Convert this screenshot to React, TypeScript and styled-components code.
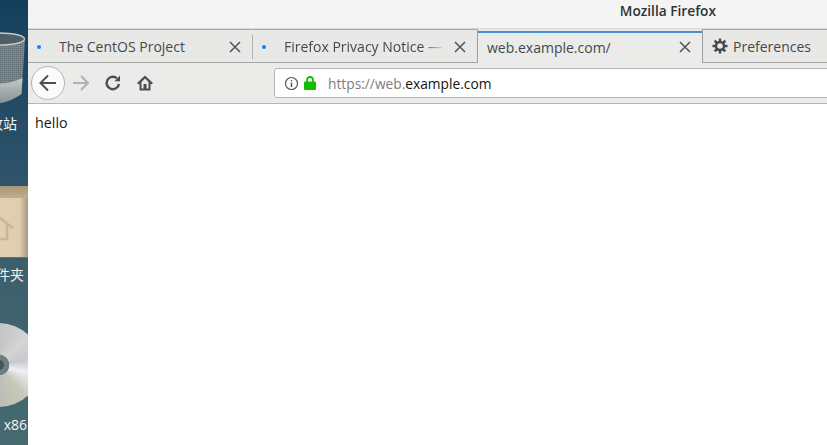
import React, { FC } from "react";
import styled, { createGlobalStyle } from "styled-components";

const Global = createGlobalStyle`
  html, body { margin: 0; padding: 0; height: 100%; overflow: hidden; }
  body { font-family: "Open Sans", "Noto Sans CJK SC", sans-serif; }
`;

const tabs = [
  { id: 1, title: "The CentOS Project", width: 225, fade: false },
  { id: 2, title: "Firefox Privacy Notice — Mozilla", width: 225, fade: true },
];

const App: FC = () => (
  <>
    <Global />
    <Screen>
      <Desktop>
        <TrashIcon viewBox="0 0 28 84">
          <defs>
            <pattern id="mesh" width="2" height="2" patternUnits="userSpaceOnUse">
              <rect width="2" height="2" fill="#727f85" />
              <rect width="1" height="1" fill="#65727a" />
              <rect x="1" y="1" width="1" height="1" fill="#828e93" />
            </pattern>
            <linearGradient id="canBottom" x1="0" x2="0" y1="0" y2="1">
              <stop offset="0" stopColor="#c4c8c7" />
              <stop offset="1" stopColor="#8a9294" />
            </linearGradient>
          </defs>
          <path d="M-24 14 H25 L21.5 68 Q-2 84 -20 72 Z" fill="url(#mesh)" />
          <path d="M-22 54 Q2 62 22.5 52 L21.5 68 Q-2 84 -20 72 Z" fill="url(#canBottom)" />
          <ellipse cx="0" cy="13" rx="24.5" ry="6" fill="#4f5e65" stroke="#c3cacc" strokeWidth="1.4" />
        </TrashIcon>
        <DesktopLabel $top={114} $right={11}>回收站</DesktopLabel>
        <FolderIcon>
          <FolderTab />
          <svg width="28" height="59" viewBox="0 0 28 59">
            <path d="M-4 17 L13 30 M7 26 V41 H-2" fill="none" stroke="#c9b59b" strokeWidth="2.5" />
          </svg>
        </FolderIcon>
        <DesktopLabel $top={265} $right={4}>件夹</DesktopLabel>
        <DiscIcon />
        <DesktopLabel $top={415} $right={1}>7 x86</DesktopLabel>
      </Desktop>
      <Window>
        <TitleBar>
          <WindowTitle>Mozilla Firefox</WindowTitle>
        </TitleBar>
        <TabStrip>
          {tabs.map((tab, i) => (
            <Tab key={tab.id} $width={tab.width} $separator={i === 0} $edge={i === 1}>
              <Dot />
              <TabTitle $fade={tab.fade}>{tab.title}</TabTitle>
              <CloseIcon />
            </Tab>
          ))}
          <ActiveTab>
            <ActiveTitle>web.example.com/</ActiveTitle>
            <CloseIcon />
          </ActiveTab>
          <PrefsTab>
            <GearIcon />
            <PrefsLabel>Preferences</PrefsLabel>
          </PrefsTab>
        </TabStrip>
        <Toolbar>
          <BackButton>
            <svg width="20" height="20" viewBox="0 0 20 20" fill="none" stroke="#4c4f52" strokeWidth="2">
              <path d="M18 10 H2.5 M10 2.5 L2.5 10 L10 17.5" />
            </svg>
          </BackButton>
          <ToolIcon $left={7}>
            <svg width="18" height="18" viewBox="0 0 18 18" fill="none" stroke="#b1b1b1" strokeWidth="2">
              <path d="M1 9 H16 M9 2 L16 9 L9 16" />
            </svg>
          </ToolIcon>
          <ToolIcon $left={14}>
            <svg width="18" height="18" viewBox="0 0 18 18" fill="none" stroke="#4c4f52" strokeWidth="2.4">
              <path d="M15 10 A6.2 6.2 0 1 1 12.8 4.2" />
              <path d="M10.5 7.2 H16 V1.6 Z" fill="#4c4f52" stroke="none" />
            </svg>
          </ToolIcon>
          <ToolIcon $left={14}>
            <svg width="18" height="18" viewBox="0 0 18 18">
              <path
                d="M9 1.5 L17 9 L15.5 10.4 L14.5 9.5 V16.5 H3.5 V9.5 L2.5 10.4 L1 9 Z M5.5 8 V14.5 H7.5 V10 H10.5 V14.5 H12.5 V8 L9 4.6 Z"
                fill="#4c4f52"
                fillRule="evenodd"
              />
            </svg>
          </ToolIcon>
          <UrlBar>
            <svg width="15" height="15" viewBox="0 0 15 15" fill="none" stroke="#55585b" strokeWidth="1.2">
              <circle cx="7.5" cy="7.5" r="6" />
              <path d="M7.5 6.5 V11 M7.5 4 V5.2" strokeWidth="1.5" />
            </svg>
            <svg width="12" height="14" viewBox="0 0 12 14">
              <path d="M3 6 V4 A3 3 0 0 1 9 4 V6" fill="none" stroke="#12bc00" strokeWidth="1.8" />
              <rect y="5.5" width="12" height="8.5" rx="1" fill="#12bc00" />
            </svg>
            <UrlText>
              <UrlMuted>https://web.</UrlMuted>example.com
            </UrlText>
          </UrlBar>
        </Toolbar>
        <Page>hello</Page>
      </Window>
    </Screen>
  </>
);

export default App;

const CloseIcon: FC = () => (
  <CloseGlyph width="12" height="12" viewBox="0 0 12 12" stroke="#55585b" strokeWidth="1.6">
    <path d="M1 1 L11 11 M11 1 L1 11" />
  </CloseGlyph>
);

const GearIcon: FC = () => (
  <svg width="16" height="16" viewBox="0 0 16 16" fill="none" stroke="#45484b">
    <circle cx="8" cy="8" r="4" strokeWidth="2.4" />
    <path
      d="M8 0.5 V3.5 M8 12.5 V15.5 M0.5 8 H3.5 M12.5 8 H15.5 M2.7 2.7 L4.8 4.8 M11.2 11.2 L13.3 13.3 M13.3 2.7 L11.2 4.8 M4.8 11.2 L2.7 13.3"
      strokeWidth="2.4"
    />
  </svg>
);

const Screen = styled.div`
  display: flex;
  width: 827px;
  height: 445px;
  overflow: hidden;
  background: #fff;
`;

const Desktop = styled.div`
  position: relative;
  flex: 0 0 28px;
  height: 445px;
  overflow: hidden;
  background: linear-gradient(180deg, #143f5c 0%, #2b5069 35%, #3c5f6c 60%, #466a70 100%);
`;

const TrashIcon = styled.svg`
  position: absolute;
  left: 0;
  top: 26px;
  width: 28px;
  height: 84px;
`;

const DesktopLabel = styled.div<{ $top: number; $right: number }>`
  position: absolute;
  right: ${(p) => p.$right}px;
  top: ${(p) => p.$top}px;
  font-size: 14px;
  line-height: 20px;
  color: #f4f4f4;
  white-space: nowrap;
`;

const FolderIcon = styled.div`
  position: absolute;
  left: 0;
  top: 186px;
  width: 28px;
  height: 71px;
  background: linear-gradient(90deg, #e2cfb2 0%, #e0ccaf 70%, #a8997f 100%);
  border-bottom: 1px solid #7d6a50;
  overflow: hidden;
`;

const FolderTab = styled.div`
  height: 12px;
  background: linear-gradient(180deg, #a89878, #bfae8c);
`;

const DiscIcon = styled.div`
  position: absolute;
  left: -43px;
  top: 323px;
  width: 84px;
  height: 84px;
  border-radius: 50%;
  background:
    radial-gradient(circle, #44565a 0 5px, #6f7e80 5px 10px, transparent 10.5px),
    conic-gradient(
      from 0deg,
      #c4c4c4 0deg,
      #d4d4d4 45deg,
      #c9c9ce 80deg,
      #eeeef6 105deg,
      #c8c8b8 140deg,
      #bdbdb8 180deg,
      #c4c4c4 360deg
    );
`;

const Window = styled.div`
  flex: 1;
  min-width: 0;
  display: flex;
  flex-direction: column;
`;

const TitleBar = styled.div`
  height: 28px;
  display: flex;
  justify-content: flex-end;
  padding-right: 111px;
  background: #f4f4f4;
  border-bottom: 1px solid #d8d8d8;
`;

const WindowTitle = styled.div`
  font-size: 13.7px;
  font-weight: 600;
  line-height: 22px;
  color: #2e3436;
`;

const TabStrip = styled.div`
  height: 33px;
  display: flex;
  background: #e8e8e7;
  border-bottom: 1px solid #a3a3a3;
`;

const Tab = styled.div<{ $width: number; $separator: boolean; $edge: boolean }>`
  position: relative;
  flex: 0 0 ${(p) => p.$width}px;
  min-width: 0;
  box-sizing: border-box;
  display: flex;
  align-items: center;
  padding: 1px 8px 0 9px;
  border-right: 1px solid ${(p) => (p.$edge ? "#9c9c9c" : "transparent")};
  border-top: 1px solid #a8a8a8;

  ${(p) =>
    p.$separator &&
    `&::after {
      content: "";
      position: absolute;
      right: -1px;
      top: 5px;
      height: 24px;
      width: 1px;
      background: #b0b0b0;
    }`}
`;

const Dot = styled.span`
  flex: 0 0 4px;
  height: 4px;
  border-radius: 50%;
  background: #0a84ff;
  margin-right: 18px;
`;

const TabTitle = styled.span<{ $fade: boolean }>`
  flex: 1;
  min-width: 0;
  overflow: hidden;
  white-space: nowrap;
  font-size: 14px;
  line-height: 30px;
  color: #45484b;
  ${(p) =>
    p.$fade &&
    `mask-image: linear-gradient(90deg, #000 calc(100% - 24px), transparent 100%);`}
`;

const CloseGlyph = styled.svg`
  flex: 0 0 12px;
  margin-left: 8px;
  margin-right: 3px;
`;

const ActiveTab = styled.div`
  flex: 0 0 224px;
  box-sizing: border-box;
  height: 32px;
  margin-top: 2px;
  margin-bottom: -1px;
  display: flex;
  align-items: center;
  padding: 0 8px 2px 9px;
  background: #ebebea;
  border-top: 2px solid #4a90d9;
  position: relative;
`;

const ActiveTitle = styled.span`
  flex: 1;
  font-size: 14px;
  color: #45484b;
  white-space: nowrap;
`;

const PrefsTab = styled.div`
  flex: 1;
  display: flex;
  align-items: center;
  gap: 5px;
  padding-left: 9px;
  border-left: 1px solid #9c9c9c;
  border-top: 1px solid #a8a8a8;
`;

const PrefsLabel = styled.span`
  font-size: 14px;
  color: #45484b;
`;

const Toolbar = styled.div`
  height: 40px;
  display: flex;
  align-items: center;
  padding-left: 3px;
  background: #ebebea;
  border-bottom: 1px solid #b5b5b5;
`;

const BackButton = styled.div`
  width: 32px;
  height: 32px;
  border-radius: 50%;
  display: flex;
  align-items: center;
  justify-content: center;
  background: #fbfbfb;
  border: 1px solid #b4b4b4;
`;

const ToolIcon = styled.div<{ $left: number }>`
  display: flex;
  margin-left: ${(p) => p.$left}px;
`;

const UrlBar = styled.div`
  flex: 1;
  height: 28px;
  margin-left: 120px;
  margin-right: -10px;
  display: flex;
  align-items: center;
  gap: 5px;
  padding-left: 9px;
  background: #fff;
  border: 1px solid #b5b5b5;
  border-radius: 3px;
`;

const UrlText = styled.span`
  margin-left: 7px;
  font-size: 13.75px;
  color: #111;
`;

const UrlMuted = styled.span`
  color: #7d7d7d;
`;

const Page = styled.div`
  flex: 1;
  padding: 9px 7px;
  background: #fff;
  font-size: 14.3px;
  line-height: 20px;
  color: #1a1a1a;
`;
